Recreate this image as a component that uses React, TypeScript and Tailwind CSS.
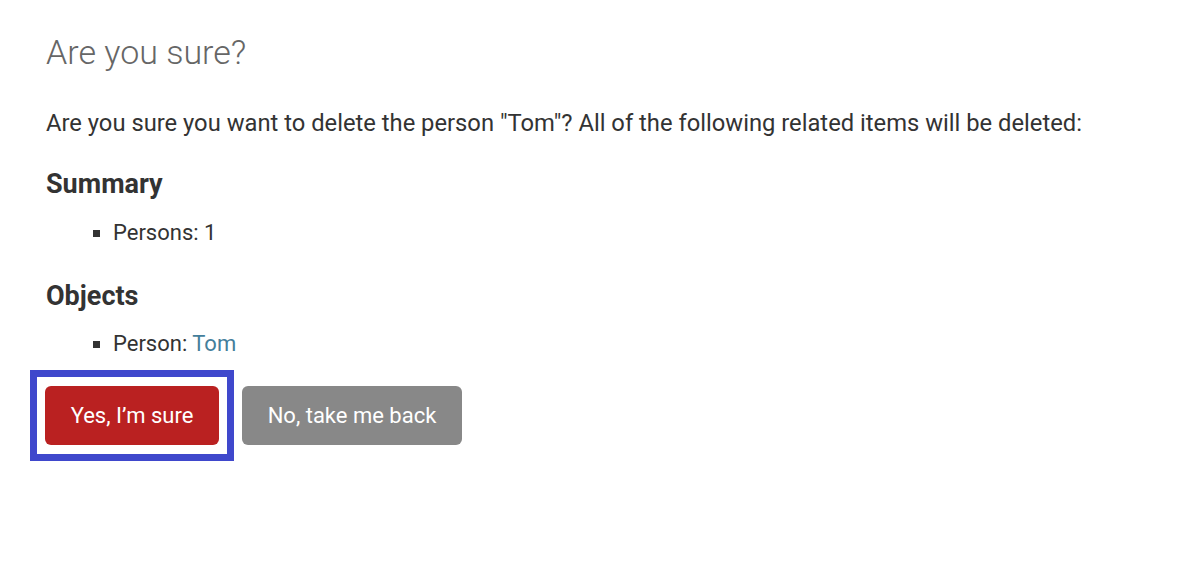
const font = { fontFamily: "Roboto, 'Liberation Sans', sans-serif" };

const Bullet = ({ children }: { children: React.ReactNode }) => (
  <li className="flex items-center">
    <span className="mr-[13px] h-[7px] w-[7px] bg-[#333]" />
    <span>{children}</span>
  </li>
);

export default function App() {
  return (
    <div className="min-h-[564px] bg-white text-[#333]" style={font}>
      <div className="px-[46px] pt-[30px]">
        <h1 className="text-[34px] leading-[44px] font-light text-[#666]">
          Are you sure?
        </h1>

        <p className="mt-[33px] text-[23.75px] leading-[32px]">
          Are you sure you want to delete the person "Tom"? All of the following
          related items will be deleted:
        </p>

        <h2 className="mt-[27px] text-[27px] leading-[36px] font-bold">
          Summary
        </h2>
        <ul className="mt-[16px] pl-[47px] text-[22px] leading-[30px]">
          <Bullet>Persons: 1</Bullet>
        </ul>

        <h2 className="mt-[30px] text-[27px] leading-[36px] font-bold">
          Objects
        </h2>
        <ul className="mt-[15px] pl-[47px] text-[22px] leading-[30px]">
          <Bullet>
            Person: <a className="text-[#447e9b]">Tom</a>
          </Bullet>
        </ul>

        <div className="mt-[11px] flex items-center gap-[8px]">
          <div className="-ml-[16px] border-[7px] border-[#3f48cc] p-[8px] pb-[9px] pt-[9px]">
            <button className="block h-[59px] w-[174px] rounded-[6px] bg-[#ba2121] text-[22px] text-white">
              Yes, I’m sure
            </button>
          </div>
          <button className="h-[59px] w-[220px] rounded-[6px] bg-[#888] text-[22px] text-white">
            No, take me back
          </button>
        </div>
      </div>
    </div>
  );
}
